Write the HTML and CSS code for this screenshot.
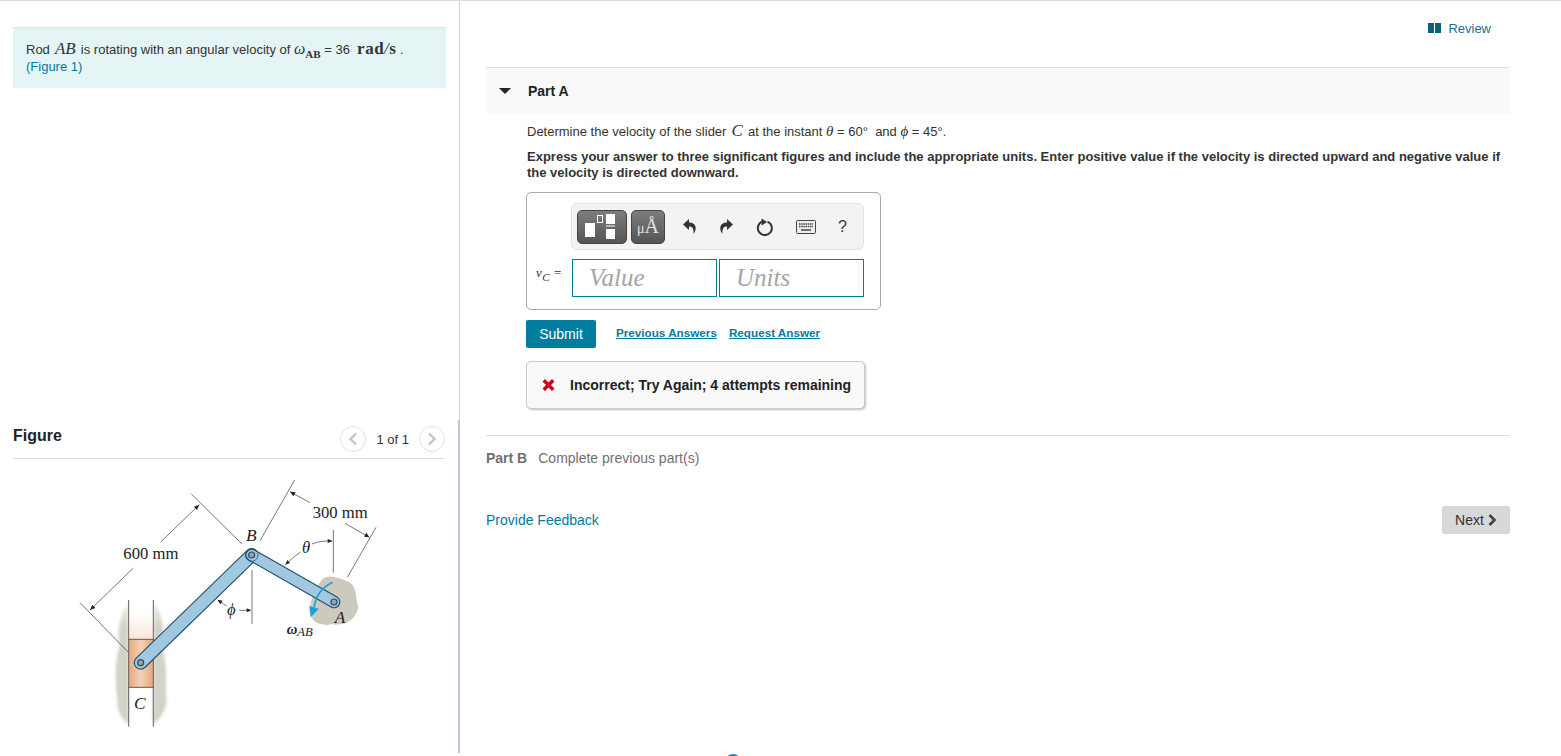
FILE: index.html
```html
<!DOCTYPE html>
<html lang="en">
<head>
  <meta charset="UTF-8" />
  <title>Part A</title>
  <link rel="stylesheet" href="styles.css">
</head>
<body>
  <div class="page">
    <div class="left">
      <div class="intro-wrap">
        <div class="intro">
          Rod <span class="math big">AB</span> is rotating with an angular velocity of <span class="math omega">ω</span><sub class="sub-ab">AB</sub> = 36 &nbsp;<span class="units">rad<i>/</i>s</span> .<br>
          <a class="link" href="#">(Figure 1)</a>
        </div>
      </div>
      <div class="figure">
        <div class="figure-head">
          <h2>Figure</h2>
          <div class="pager">
            <span class="circle">
              <svg width="10" height="14" viewBox="0 0 10 14"><path d="M8 1.500 2.500 7 8 12.500" fill="none" stroke="#c4c4c4" stroke-width="2.400"/></svg>
            </span>
            <span class="pager-text">1 of 1</span>
            <span class="circle">
              <svg width="10" height="14" viewBox="0 0 10 14"><path d="M2 1.500 7.500 7 2 12.500" fill="none" stroke="#c4c4c4" stroke-width="2.400"/></svg>
            </span>
          </div>
        </div>
        <svg class="diagram" width="330" height="270" viewBox="0 0 990 810">
          <defs>
            <linearGradient id="slot" x1="0" y1="0" x2="0" y2="1">
              <stop offset="0" stop-color="#fff"/>
              <stop offset="1" stop-color="#f8e6d6"/>
            </linearGradient>
            <linearGradient id="slider" x1="0" y1="0" x2="1" y2="0">
              <stop offset="0" stop-color="#e3a97f"/>
              <stop offset="0.5" stop-color="#f5d2b6"/>
              <stop offset="1" stop-color="#e2a67b"/>
            </linearGradient>
            <linearGradient id="wall" x1="0" y1="0" x2="0" y2="1">
              <stop offset="0" stop-color="#d3d2c8" stop-opacity="0.4"/>
              <stop offset="0.2" stop-color="#d3d2c8"/>
              <stop offset="1" stop-color="#d3d2c8"/>
            </linearGradient>
            <filter id="soft"><feGaussianBlur stdDeviation="4"/></filter>
          </defs>
          <!-- ground -->
          <g filter="url(#soft)">
            <path d="M206 400C178 430 172 480 178 530C160 590 168 650 172 690C170 720 185 750 206 762Z" fill="url(#wall)"/>
            <path d="M280 400C312 430 312 480 306 530C326 590 314 650 320 690C318 720 300 750 280 762Z" fill="url(#wall)"/>
          </g>
          <path d="M790 325C815 312 835 325 865 335C895 350 885 385 895 410C890 450 850 470 815 462C790 470 755 460 750 430C745 400 770 345 790 325Z" fill="#cbcabc"/>
          <!-- slot and slider -->
          <rect x="206" y="430" width="74" height="78" fill="url(#slot)"/>
          <rect x="206" y="508" width="74" height="144" fill="url(#slider)"/>
          <path d="M206 508H280M206 652H280" stroke="#4a4038" stroke-width="2.500"/>
          <path d="M206 390V770M280 390V770" stroke="#444" stroke-width="2.500" fill="none"/>
          <!-- dimension lines -->
          <g stroke="#444" stroke-width="2.200" fill="none">
            <path d="M60 398 206 548"/>
            <path d="M394 72 546 222"/>
            <path d="M90 420 220 294"/>
            <path d="M302 216 418 104"/>
            <path d="M600 212 704 30"/>
            <path d="M690 65 750 98"/>
            <path d="M855 160 928 202"/>
            <path d="M862 322 948 172"/>
            <path d="M820 180V308"/>
            <path d="M576 300V462"/>
            <path d="M756 222C775 214 795 212 815 213"/>
            <path d="M676 284C690 270 705 258 722 246"/>
            <path d="M476 392 500 408"/>
            <path d="M538 421H570"/>
          </g>
          <g fill="#222">
            <path d="M90 420 106 414 97 404Z"/>
            <path d="M418 104 402 110 411 120Z"/>
            <path d="M690 65 707 67 700 79Z"/>
            <path d="M928 202 912 200 919 188Z"/>
            <path d="M818 213 803 207 803 219Z"/>
            <path d="M676 284 690 279 682 270Z"/>
            <path d="M472 389 488 392 481 403Z"/>
            <path d="M574 421 560 415 560 427Z"/>
          </g>
          <!-- rods -->
          <path d="M242 578 575 255" stroke="#27506b" stroke-width="42" stroke-linecap="round"/>
          <path d="M242 578 575 255" stroke="#a0c8e0" stroke-width="35" stroke-linecap="round"/>
          <path d="M575 255 822 396" stroke="#27506b" stroke-width="38" stroke-linecap="round"/>
          <path d="M575 255 822 396" stroke="#a0c8e0" stroke-width="31" stroke-linecap="round"/>
          <g fill="#a0a0a0" stroke="#27506b" stroke-width="3.500">
            <circle cx="242" cy="578" r="9"/>
            <circle cx="575" cy="255" r="9"/>
            <circle cx="822" cy="396" r="9"/>
          </g>
          <circle cx="575" cy="255" r="19" fill="none" stroke="#27506b" stroke-width="2.500"/>
          <!-- angular velocity arrow -->
          <path d="M818 337C790 350 768 375 762 412" fill="none" stroke="#1fa0dc" stroke-width="5"/>
          <path d="M752 442 748 408 776 416Z" fill="#1fa0dc"/>
          <!-- labels -->
          <g class="fig-text">
            <text x="190" y="267" font-size="50">600 mm</text>
            <text x="758" y="143" font-size="50">300 mm</text>
            <text x="558" y="212" font-size="52" font-style="italic">B</text>
            <text x="824" y="460" font-size="52" font-style="italic">A</text>
            <text x="222" y="716" font-size="52" font-style="italic">C</text>
            <text x="726" y="248" font-size="50" font-style="italic">θ</text>
            <text x="501" y="434" font-size="50" font-style="italic">ϕ</text>
            <text x="680" y="492" font-size="44" font-style="italic" font-weight="bold">ω<tspan font-size="38" font-weight="normal" dy="6">AB</tspan></text>
          </g>
        </svg>
      </div>
    </div>

    <div class="right">
      <div class="review">
        <svg width="13" height="10" viewBox="0 0 13 10"><path d="M0 0H6V10H0ZM7 0H13V10H7Z" fill="#0b6079"/></svg>
        <span>Review</span>
      </div>

      <div class="part-head">
        <span class="caret"></span>
        <h3>Part A</h3>
      </div>

      <div class="part-body">
        <p class="question">Determine the velocity of the slider <span class="math big">C</span> at the instant <span class="math">θ</span> = 60° &nbsp;and <span class="math">ϕ</span> = 45°.</p>
        <p class="instruction">Express your answer to three significant figures and include the appropriate units. Enter positive value if the velocity is directed upward and negative value if the velocity is directed downward.</p>

        <div class="answer">
          <div class="toolbar">
            <button class="tool tool-template">
              <svg width="36" height="26" viewBox="0 0 36 26">
                <rect x="1" y="9" width="10" height="14" fill="#fff"/>
                <rect x="13.500" y="1.500" width="5" height="7" fill="none" stroke="#fff"/>
                <rect x="22" y="0" width="9" height="10" fill="#fff"/>
                <rect x="22" y="11.500" width="9" height="1" fill="#fff"/>
                <rect x="22" y="15" width="9" height="10" fill="#fff"/>
              </svg>
            </button>
            <button class="tool tool-units"><span class="mu">μ</span>Å</button>
            <div class="tool-icons">
              <svg width="14" height="15" viewBox="0 0 14 15"><path d="M6 0 0 5.500 6 11V7.500C9 7.500 11 9 10.500 15C14 11 14 3.500 6 3.500Z" fill="#333"/></svg>
              <svg width="14" height="15" viewBox="0 0 14 15"><path d="M8 0 14 5.500 8 11V7.500C5 7.500 3 9 3.500 15C0 11 0 3.500 8 3.500Z" fill="#333"/></svg>
              <svg width="18" height="18" viewBox="0 0 18 18"><path d="M11.500 3.600A7 7 0 1 1 6 3.700" fill="none" stroke="#333" stroke-width="2"/><path d="M5.500 .5V7.500L11 4Z" fill="#333"/></svg>
              <svg width="20" height="14" viewBox="0 0 20 14"><rect x=".5" y=".5" width="19" height="13" rx="1" fill="#eee" stroke="#444"/><path d="M3 4H17M3 6.500H17" stroke="#444" stroke-width="1.500" stroke-dasharray="1.500 .7"/><path d="M5 10H15" stroke="#444" stroke-width="1.500"/></svg>
              <span class="help">?</span>
            </div>
          </div>
          <div class="answer-row">
            <span class="answer-label"><i>v</i><sub><i>C</i></sub> =</span>
            <div class="field">Value</div>
            <div class="field">Units</div>
          </div>
        </div>

        <div class="actions">
          <button class="submit">Submit</button>
          <a class="action-link" href="#">Previous Answers</a>
          <a class="action-link" href="#">Request Answer</a>
        </div>

        <div class="feedback">
          <svg width="15" height="14" viewBox="0 0 15 14"><path d="M1.500 3.500 4 1l3.500 3.500L11 1l2.500 2.500L10 7l3.500 3.500L11 13 7.500 9.500 4 13l-2.500-2.500L5 7Z" fill="#d0021b"/></svg>
          <span>Incorrect; Try Again; 4 attempts remaining</span>
        </div>
      </div>

      <div class="part-b"><b>Part B</b><span>Complete previous part(s)</span></div>

      <div class="bottom-row">
        <a class="link" href="#">Provide Feedback</a>
        <button class="next">Next
          <svg width="9" height="12" viewBox="0 0 9 12"><path d="M1.500 1 6.500 6l-5 5" fill="none" stroke="#444" stroke-width="2.600"/></svg>
        </button>
      </div>
    </div>
  </div>
  <div class="spinner"></div>
</body>
</html>
```

FILE: styles.css
```css
html, body {
  height: 100%;
}

body {
  font-family: "Liberation Sans", Arial, sans-serif;
  font-size: 13px;
  color: #333;
  background-color: #fff;
  margin: 0;
  overflow: hidden;
}

a {
  color: #007c9f;
  text-decoration: none;
}

button {
  font-family: inherit;
  border: none;
  padding: 0;
}

.page {
  display: flex;
  height: 752px;
  border-top: 1px solid #ddd;
}

.math {
  font-family: "Liberation Serif", serif;
  font-style: italic;
  font-size: 15px;
}

.math.big {
  font-size: 17px;
  margin: 0 1.500px;
}

/* left column */
.left {
  width: 460px;
  flex: none;
  display: flex;
  flex-direction: column;
}

.intro-wrap {
  height: 419px;
  box-sizing: border-box;
  padding: 26px 13px 0;
  border-right: 1px solid #cfd3da;
}

.intro {
  width: 433px;
  height: 61px;
  box-sizing: border-box;
  padding: 12px 13px 0;
  line-height: 17px;
  background-color: #e5f5f6;
  border-top: 1px solid #dde3e3;
}

.omega {
  font-size: 16px;
}

.sub-ab {
  font-family: "Liberation Serif", serif;
  font-weight: bold;
  font-size: 11px;
  line-height: 0;
}

.units {
  font-family: "Liberation Serif", serif;
  font-weight: bold;
  font-size: 17px;
  letter-spacing: 0.5px;
}

.units i {
  font-weight: normal;
}

.figure {
  flex: 1;
  padding: 0 13px;
  border-right: 2px solid #b9cadb;
}

.figure-head {
  display: flex;
  justify-content: space-between;
  align-items: center;
  height: 38px;
  border-bottom: 1px solid #ddd;
}

.figure-head h2 {
  margin: 0 0 6px;
  font-size: 16px;
  font-weight: bold;
  color: #222;
}

.pager {
  display: flex;
  align-items: center;
  gap: 10px;
}

.circle {
  display: flex;
  align-items: center;
  justify-content: center;
  width: 24px;
  height: 24px;
  border: 1px solid #e2e2e2;
  border-radius: 50%;
}

.diagram {
  display: block;
  margin: 11px 0 0 47px;
}

.fig-text {
  font-family: "Liberation Serif", serif;
  fill: #222;
}

/* right column */
.right {
  flex: 1;
  min-width: 0;
  padding: 0 51px 0 26px;
}

.review {
  display: flex;
  align-items: center;
  justify-content: flex-end;
  gap: 7px;
  height: 54px;
  padding-right: 19px;
  margin-bottom: 12px;
  color: #1a6f8f;
}

.part-head {
  display: flex;
  align-items: center;
  height: 46px;
  border-top: 1px solid #ddd;
  background-color: #f9f9f9;
}

.caret {
  width: 0;
  height: 0;
  margin-left: 13px;
  border-left: 6px solid transparent;
  border-right: 6px solid transparent;
  border-top: 6px solid #222;
}

.part-head h3 {
  margin: 0 0 0 17px;
  font-size: 14px;
  font-weight: bold;
  color: #222;
}

.part-body {
  padding-left: 40px;
}

.question {
  margin: 8px 0 9px;
  padding-left: 1px;
  line-height: 17px;
}

.instruction {
  margin: 0 0 11px;
  padding-left: 1px;
  font-weight: bold;
  line-height: 16px;
}

.answer {
  width: 355px;
  height: 118px;
  box-sizing: border-box;
  border: 1px solid #aaa;
  border-radius: 5px;
  padding: 10px 16px 0 0;
}

.toolbar {
  display: flex;
  align-items: center;
  height: 47px;
  box-sizing: border-box;
  margin-left: 44px;
  padding-left: 5px;
  background-color: #f3f3f3;
  border: 1px solid #e2e2e2;
  border-radius: 6px;
}

.tool {
  display: flex;
  align-items: center;
  justify-content: center;
  height: 34px;
  border: 1px solid #444;
  border-radius: 5px;
  background: linear-gradient(#7d7d7d, #555);
  box-sizing: border-box;
}

.tool-template {
  width: 50px;
  margin-right: 4px;
}

.tool-units {
  width: 34px;
  font-family: "Liberation Serif", serif;
  font-size: 20px;
  color: #e4e4e4;
}

.mu {
  font-size: 14px;
  margin-top: 5px;
}

.tool-icons {
  flex: 1;
  display: flex;
  align-items: center;
  justify-content: space-between;
  padding: 0 16px 0 18px;
}

.help {
  font-size: 16px;
  color: #333;
}

.answer-row {
  display: flex;
  align-items: center;
  gap: 2px;
  margin-top: 9px;
}

.answer-label {
  width: 43px;
  margin-bottom: 8px;
  text-align: right;
  padding-right: 8px;
  box-sizing: border-box;
  font-family: "Liberation Serif", serif;
  font-size: 13px;
  letter-spacing: 0.6px;
  white-space: nowrap;
}

.answer-label sub {
  font-size: 11px;
}

.field {
  width: 145px;
  height: 38px;
  box-sizing: border-box;
  padding-left: 16px;
  border: 1px solid #007c9f;
  font-family: "Liberation Serif", serif;
  font-style: italic;
  font-size: 25px;
  line-height: 36px;
  color: #a5a5a5;
}

.actions {
  display: flex;
  align-items: center;
  gap: 12px;
  margin-top: 10px;
}

.submit {
  width: 70px;
  height: 28px;
  margin-right: 8px;
  font-size: 14px;
  color: #fff;
  background-color: #007c9f;
  border-radius: 2px;
}

.action-link {
  font-size: 11.7px;
  font-weight: bold;
  text-decoration: underline;
  margin-bottom: 4px;
}

.feedback {
  display: flex;
  align-items: center;
  gap: 14px;
  width: 339px;
  height: 48px;
  box-sizing: border-box;
  margin-top: 13px;
  padding-left: 14px;
  font-size: 14px;
  font-weight: bold;
  color: #222;
  background-color: #f9f9f9;
  border: 1px solid #ccc;
  border-radius: 5px;
  box-shadow: 1px 1px 2px rgba(0, 0, 0, 0.25);
}

.part-b {
  display: flex;
  gap: 11px;
  align-items: center;
  height: 44px;
  margin-top: 26px;
  border-top: 1px solid #ddd;
  font-size: 14px;
  color: #707070;
}

.bottom-row {
  display: flex;
  justify-content: space-between;
  align-items: center;
  margin-top: 26px;
  font-size: 14px;
}

.next {
  display: flex;
  align-items: center;
  justify-content: center;
  gap: 4px;
  width: 68px;
  height: 28px;
  font-size: 14px;
  color: #333;
  background-color: #d8d8d8;
  border-radius: 2px;
}

.spinner {
  position: absolute;
  left: 725px;
  top: 754px;
  width: 16px;
  height: 16px;
  box-sizing: border-box;
  border: 2px solid #2a86ad;
  border-radius: 50%;
}
```
